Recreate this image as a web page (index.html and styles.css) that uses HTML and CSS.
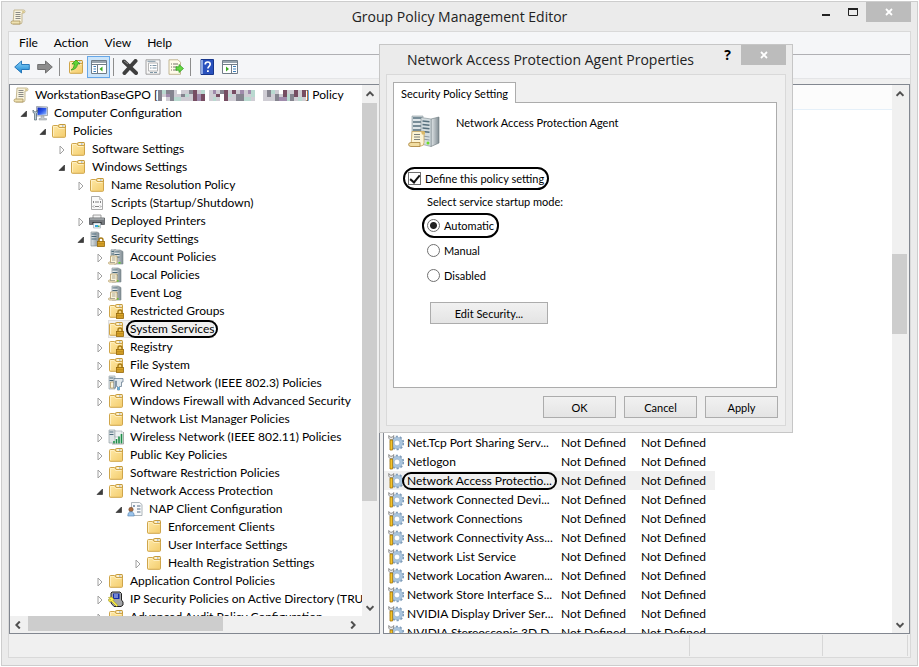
FILE: index.html
```html
<!DOCTYPE html>
<html lang="en">
<head>
<meta charset="utf-8">
<title>Group Policy Management Editor</title>
<link rel="stylesheet" href="styles.css">
</head>
<body>
<svg class="defs" aria-hidden="true">
  <defs>
    <linearGradient id="gold" x1="0" y1="0" x2="1" y2="1"><stop offset="0" stop-color="#ffe9a6"/><stop offset="1" stop-color="#f3cc6c"/></linearGradient>
    <linearGradient id="steel" x1="0" y1="0" x2="1" y2="0"><stop offset="0" stop-color="#e3e8ea"/><stop offset="1" stop-color="#7f8b92"/></linearGradient>
    <linearGradient id="sky" x1="0" y1="0" x2="0" y2="1"><stop offset="0" stop-color="#8fd6fb"/><stop offset="1" stop-color="#1583d0"/></linearGradient>
    <linearGradient id="screen" x1="0" y1="0" x2="1" y2="1"><stop offset="0" stop-color="#0a1fb0"/><stop offset=".5" stop-color="#2a56ea"/><stop offset="1" stop-color="#9cc4ff"/></linearGradient>
    <symbol id="scroll" viewBox="0 0 16 16">
      <path d="M4 1h9.500q1.500 0 1.500 1.500T13.500 4H12v9q0 2-2 2H3z" fill="#f7f2de" stroke="#b9aa7c" stroke-width=".8"/>
      <path d="M1 13.500Q1 12 2.500 12H10v3H2.500Q1 15 1 13.500z" fill="#efe2b2" stroke="#a8935c" stroke-width=".8"/>
      <path d="M12.500 1.500q-1 1 0 2.500h1.800V2z" fill="#d9c88e"/>
      <path d="M5.500 3.500h5M5.500 5.500h5M5.500 7.500h5M5.500 9.500h5" stroke="#8a8a86" stroke-width="1"/>
    </symbol>
    <symbol id="folder" viewBox="0 0 16 16">
      <path d="M7.500 4.500V2.500q0-1 1-1H14q.5 0 .5 1v3z" fill="#f7dc94" stroke="#c49a3c" stroke-width="1"/>
      <path d="M9 3h4.500" stroke="#fff" stroke-width="1.200"/><path d="M11 3h1.500" stroke="#7b9fc4"/>
      <path d="M1.500 13.500v-10q0-1 1-1H6.500L8 4.500h6q.5 0 .5 1v8q0 .8-.8.800H2.300q-.8 0-.8-.8z" fill="url(#gold)" stroke="#cfa54a" stroke-width="1"/>
      <path d="M2.500 13V3.500h3.700l1.500 2H13.500" fill="none" stroke="#fff3cc" stroke-width=".8"/>
    </symbol>
    <symbol id="lock" viewBox="0 0 16 16">
      <path d="M10 11V9a2 2 0 0 1 4 0v2" fill="none" stroke="#a87b16" stroke-width="1.400"/>
      <rect x="8.500" y="10.500" width="7" height="5" fill="#e5ae2e" stroke="#94680b" stroke-width=".8"/>
      <path d="M9 12.300h6M9 14h6" stroke="#a87812" stroke-width=".7"/>
    </symbol>
    <symbol id="folder-lock" viewBox="0 0 16 16"><use href="#folder"/><use href="#lock"/></symbol>
    <symbol id="computer" viewBox="0 0 16 16">
      <path d="M4.500 1.500 15.500 2v8.500L4.500 11z" fill="#dfe3e8" stroke="#8e969e" stroke-width=".8"/>
      <path d="M5.500 2.500 14.500 3v6.600L5.500 10z" fill="url(#screen)"/>
      <path d="M9 11h3v2.500h2.500V15H7v-1.500h2z" fill="#c3c8cc" stroke="#8d9499" stroke-width=".5"/>
      <path d="M1 5v2.500l1.500 1V15h2V8.500l1-1V5L4.300 6.800H2.500z" fill="#b9ccd6" stroke="#51646f" stroke-width=".7"/>
    </symbol>
    <symbol id="script" viewBox="0 0 16 16">
      <path d="M2.500 1.500h8l3 3v10h-11z" fill="#fafafa" stroke="#a9a9a9"/><path d="M10.500 1.500v3h3" fill="#e1e1e1" stroke="#b5b5b5" stroke-width=".7"/>
      <path d="M5 6 4 7l1 1M11 6l1 1-1 1M6 7h4M5 10.500l-1 1 1 1M11 10.500l1 1-1 1M6 11.500h4" fill="none" stroke="#777" stroke-width=".9"/>
    </symbol>
    <symbol id="printer" viewBox="0 0 16 16">
      <path d="M4 5V2h8v3" fill="#f4f4f4" stroke="#8c8c8c" stroke-width=".8"/>
      <path d="M.5 5h15v6.500H.5z" fill="#73777b" stroke="#54585c" stroke-width=".8"/><path d="M1 6h14" stroke="#c4c9cc"/>
      <path d="M3.500 9h9v2h-9z" fill="#26292b"/><path d="M4.500 10h7v5h-7z" fill="#eef5fa" stroke="#97a4ad" stroke-width=".6"/>
      <path d="M6 12h3v2H6z" fill="#36a5d6"/><path d="M9 12.500h1.500V14H9z" fill="#55b14a"/>
    </symbol>
    <symbol id="tower" viewBox="0 0 16 16">
      <path d="M5 1h6l3 1.500V15H5z" fill="url(#steel)" stroke="#7b868c" stroke-width=".6"/><path d="M5.500 3h5M5.500 5.500h5M5.500 8h5" stroke="#4a6878" stroke-width="1.200"/>
      <path d="M5.500 4.200h5M5.500 6.800h5" stroke="#fff" stroke-width=".7"/><rect x="9.500" y="13" width="2" height="1.600" fill="#5fd01f"/>
    </symbol>
    <symbol id="mini-scroll" viewBox="0 0 16 16">
      <path d="M2.500 7H9v6.500q0 1.500-1.500 1.500H1.500q-1 0-1-1t1-1h1z" fill="#fbf4dc" stroke="#b59c66" stroke-width=".8"/><path d="M4 9h3.500M4 11h3.500M2 13.500h5" stroke="#8b8775" stroke-width=".7"/>
    </symbol>
    <symbol id="server-lock" viewBox="0 0 16 16"><path d="M2 1h6l2 1v13H2z" fill="url(#steel)" stroke="#7b868c" stroke-width=".6"/><path d="M2.500 3h5M2.500 5.500h5M2.500 8h5" stroke="#49687a" stroke-width="1.200"/><use href="#lock"/></symbol>
    <symbol id="server" viewBox="0 0 16 16"><use href="#tower" x="-1"/><use href="#mini-scroll"/></symbol>
    <symbol id="servers" viewBox="0 0 16 16"><path d="M3 .8h5v12H3z" fill="#c4cdd1" stroke="#78868e" stroke-width=".6"/><path d="M3.500 2.500h4M3.500 5h4" stroke="#49687a"/><use href="#tower" x="1"/><use href="#mini-scroll"/></symbol>
    <symbol id="wired" viewBox="0 0 16 16"><path d="M1 1h6v13H1z" fill="#dfe4e6" stroke="#87939a" stroke-width=".6"/><path d="M1.500 3h4M1.500 5.500h4" stroke="#49687a"/><path d="M2.500 7H6v6H2.500z" fill="#fbf4dc" stroke="#b59c66" stroke-width=".8"/><path d="M6 3.500h9V7h-1.500v4.500h-2V15h-2v-3.500H8.500V6H7.500v7H6z" fill="#e2e9ee" stroke="#6d8294" stroke-width=".8"/><path d="M9.500 12h2v3h-2z" fill="#65aeda"/></symbol>
    <symbol id="wireless" viewBox="0 0 16 16"><path d="M1 1h6v13H1z" fill="#dfe4e6" stroke="#87939a" stroke-width=".6"/><path d="M1.500 3h4M1.500 5.500h4" stroke="#49687a"/><path d="M7 2h7v6H7z" fill="#eef1f2" stroke="#98a3a9" stroke-width=".6"/><path d="M4 14.500 15.500 3v11.500z" fill="#e4f3e7"/><path d="M6 14.500V12M8.500 14.500V10M11 14.500V7.500M13.500 14.500V5" stroke="#1d8d4a" stroke-width="1.600"/><path d="M4 15h11.500V3" fill="none" stroke="#777" stroke-width=".6"/></symbol>
    <symbol id="nap" viewBox="0 0 16 16"><path d="M4.500 1.500h8l2.500 2v11H4.500z" fill="#f9fafb" stroke="#9ba3a9" stroke-width=".8"/><path d="M10 5h3.500M10 8h3.500M10 11h3.500" stroke="#536b83"/><circle cx="7" cy="5" r="1" fill="#617e9c"/><circle cx="4" cy="8.500" r="2.200" fill="#a8683c" stroke="#66442b" stroke-width=".5"/><path d="M.8 15q0-4.300 3.200-4.300T7.200 15z" fill="#9bc3ea" stroke="#4e7eac" stroke-width=".6"/></symbol>
    <symbol id="ipsec" viewBox="0 0 16 16"><path d="M4 1h8l1.500 1.500V9L15 11v3l-2 1.500H6L3 12V2z" fill="#a3a5a8" stroke="#222" stroke-width="1"/><path d="M5 2.500h6.500V8H5z" fill="#132ca8"/><path d="M6 4h4M6 6h4" stroke="#cfdcff"/><path d="M.5 6.500 4 6l2 2.500L5 9.500l5 5-1.500 1-5-5L1.500 11 0 8.500l2.500.500z" fill="#fff34a" stroke="#8d8208" stroke-width=".5"/></symbol>
    <symbol id="gear" viewBox="0 0 16 16">
      <g transform="translate(9 8)"><circle r="6.400" fill="none" stroke="#7f9dba" stroke-width="1.800" stroke-dasharray="2.200 1.820"/><circle r="4.300" fill="#fff" stroke="#a9c5de" stroke-width="2.800"/><circle r="5.700" fill="none" stroke="#7f9dba" stroke-width=".5"/><circle r="2.900" fill="#fff" stroke="#7699b8" stroke-width=".6"/></g>
      <path d="M.8.500v2.600l1.300 1.700h2.300L5.700 3.100V.5L4.300 2.200H2.300z" fill="#ececec" stroke="#777" stroke-width=".8"/><path d="M2 5h2.600v10H2z" fill="#f6c52b" stroke="#9f7209" stroke-width=".8"/>
    </symbol>
    <symbol id="collapsed" viewBox="0 0 11 18"><path d="M1.500 6v8l4-4z" fill="#fff" stroke="#a0a0a0"/></symbol>
    <symbol id="expanded" viewBox="0 0 11 18"><path d="M6 7v5.500H.5z" fill="#3c3c3c" stroke="#222" stroke-width=".6"/></symbol>
    <symbol id="up" viewBox="0 0 8 6"><path d="M.5 4.800 4 1.300l3.500 3.500" fill="none" stroke="#505050" stroke-width="2"/></symbol>
  </defs>
</svg>

<main class="window">
  <header class="titlebar">
    <svg class="app-icon"><use href="#scroll"/></svg>
    <h1>Group Policy Management Editor</h1>
    <div class="controls">
      <button class="ctl" aria-label="Minimize"><svg width="10" height="10"><path d="M1 7h8v2H1z" fill="#222"/></svg></button>
      <button class="ctl" aria-label="Maximize"><svg width="10" height="10"><path d="M.5 1.500h9v7h-9z" fill="none" stroke="#222"/><path d="M0 1h10v2H0z" fill="#222"/></svg></button>
      <button class="close" aria-label="Close"><svg width="8" height="8"><path d="m1 1 6 6M7 1 1 7" stroke="#fff" stroke-width="1.800"/></svg></button>
    </div>
  </header>

  <div class="frame">
    <nav class="menu"><button>File</button><button>Action</button><button>View</button><button>Help</button></nav>
    <div class="toolbar">
      <button aria-label="Back"><svg viewBox="0 0 16 16"><path d="M.7 8 7.500 2v3.500h7.800v5H7.500V14z" fill="url(#sky)" stroke="#1a6eb4" stroke-width=".9"/></svg></button>
      <button aria-label="Forward"><svg viewBox="0 0 16 16"><path d="M15.300 8 8.500 2v3.500H.7v5h7.800V14z" fill="#8d8d8d" stroke="#686868" stroke-width=".9"/></svg></button>
      <i></i>
      <button aria-label="Up one level"><svg viewBox="0 0 16 16"><use href="#folder"/><path d="M3 11q3-1 3.500-6H4l4-4 4 4H9.500Q9 10.500 3 11z" fill="#62d435" stroke="#279014" stroke-width=".7"/></svg></button>
      <button class="active" aria-label="Show console tree"><svg viewBox="0 0 16 16"><path d="M.5 1.500h15v13H.5z" fill="#fff" stroke="#707d88"/><path d="M1 2h14v2H1z" fill="#98a4ae"/><path d="M1 5.500h14M6.500 5.500v9" stroke="#707d88"/><path d="M2.500 7.500h2.500M2.500 10h2.500M2.500 12.500h2.500" stroke="#3d80bb" stroke-width="1.200"/><path d="M11.500 7.500v5L8.500 10z" fill="#3bab22"/></svg></button>
      <i></i>
      <button aria-label="Delete"><svg viewBox="0 0 16 16"><path d="m2 2.500 12 11.500M13.500 2 2.500 14" stroke="#3f3f3f" stroke-width="4" stroke-linecap="round"/><path d="m2 2 4 3" stroke="#8b8b8b"/></svg></button>
      <button aria-label="Properties"><svg viewBox="0 0 16 16"><path d="M1 .8h14v14.400H1z" fill="#f6f6f6" stroke="#8d8d8d" stroke-width=".8"/><path d="M3.500 4h9v8h-9z" fill="#fff" stroke="#a4a4a4" stroke-width=".8"/><path d="M2.500 2.300h8M5 6.500h1.500M5 9h1.500M7.500 6.500h4M7.500 9h4M5 13.500h3M9 13.500h3" stroke="#7f97a6"/></svg></button>
      <button aria-label="Export list"><svg viewBox="0 0 16 16"><path d="M1 .8h9l2.500 2.500v12H1z" fill="#fffbea" stroke="#b4a77c" stroke-width=".8"/><path d="M3 5h1M3 8h1M3 11h1M5 5h5M5 8h4M5 11h4" stroke="#76746a"/><path d="M8 7.800h3V5.500L15.500 9.500 11 13.500v-2.300H8z" fill="#65d743" stroke="#289a1b" stroke-width=".7"/></svg></button>
      <i></i>
      <button aria-label="Help"><svg viewBox="0 0 16 16"><path d="M2 .5h12.500v15H2z" fill="#2951be" stroke="#17368c"/><path d="M2 1h2v14H2z" fill="#8fa9e3"/><path d="M6.200 5.500Q6.200 3 8.700 3t2.500 2.300c0 2-2.300 2-2.300 4.200" fill="none" stroke="#fff" stroke-width="1.700"/><path d="M8 11.300h1.800V13H8z" fill="#fff"/></svg></button>
      <button aria-label="Show action pane"><svg viewBox="0 0 16 16"><path d="M.5 1.500h15v13H.5z" fill="#fff" stroke="#707d88"/><path d="M1 2h14v2H1z" fill="#98a4ae"/><path d="M1 5.500h14M9.500 5.500v9" stroke="#707d88"/><path d="M11 7.500h3M11 10h3M11 12.500h3" stroke="#3d80bb" stroke-width="1.200"/><path d="M4 7.500v5L7 10z" fill="#3bab22"/></svg></button>
    </div>

    <div class="panes">
      <section class="pane tree-pane">
        <div class="tree">
          <div class="row root"><svg class="ic"><use href="#scroll"/></svg><span>WorkstationBaseGPO [</span><svg class="mosaic" viewBox="0 0 38 3" preserveAspectRatio="none" shape-rendering="crispEdges">
            <path fill="#cfcdd4" d="M0 0h38v3H0z"/>
            <path fill="#85848f" d="M0 0h1v3H0zM2 0h2v1H2zM3 1h1v2H3zM6 1h1v1H6zM8 0h2v1H8zM16 0h2v1h-2zM20 1h2v2h-2zM28 0h1v2h-1zM30 1h1v2h-1zM34 1h1v2h-1z"/>
            <path fill="#764d62" d="M9 0h1v3H9zM11 1h1v2h-1zM15 1h1v1h-1zM17 0h1v3h-1zM19 0h1v1h-1zM32 0h1v2h-1zM35 0h1v2h-1zM37 0h1v2h-1z"/>
            <path fill="#b9d9d0" d="M1 0h1v1H1zM4 2h2v1H4zM7 1h1v1H7zM11 0h1v1h-1zM14 2h1v1h-1zM18 1h1v1h-1zM22 2h2v1h-2zM24 0h1v2h-1zM29 0h1v1h-1zM33 1h1v2h-1zM36 2h1v1h-1z"/>
            <path fill="#fff" d="M1 2h1v1H1zM5 0h1v1H5zM12 0h1v3h-1zM16 1h1v2h-1zM25 0h2v3h-2zM31 0h1v1h-1z"/>
            <path fill="#a08bac" d="M2 1h1v1H2zM10 1h1v2h-1zM14 0h1v1h-1zM21 0h1v1h-1zM23 0h1v1h-1zM31 2h2v1h-2z"/>
          </svg><span>] Policy</span></div>
          <ul>
            <li><div class="row"><svg class="tw"><use href="#expanded"/></svg><svg class="ic"><use href="#computer"/></svg><span>Computer Configuration</span></div>
            <ul>
              <li><div class="row"><svg class="tw"><use href="#expanded"/></svg><svg class="ic"><use href="#folder"/></svg><span>Policies</span></div>
              <ul>
                <li><div class="row"><svg class="tw"><use href="#collapsed"/></svg><svg class="ic"><use href="#folder"/></svg><span>Software Settings</span></div></li>
                <li><div class="row"><svg class="tw"><use href="#expanded"/></svg><svg class="ic"><use href="#folder"/></svg><span>Windows Settings</span></div>
                <ul>
                  <li><div class="row"><svg class="tw"><use href="#collapsed"/></svg><svg class="ic"><use href="#folder"/></svg><span>Name Resolution Policy</span></div></li>
                  <li><div class="row"><svg class="tw"></svg><svg class="ic"><use href="#script"/></svg><span>Scripts (Startup/Shutdown)</span></div></li>
                  <li><div class="row"><svg class="tw"><use href="#collapsed"/></svg><svg class="ic"><use href="#printer"/></svg><span>Deployed Printers</span></div></li>
                  <li><div class="row"><svg class="tw"><use href="#expanded"/></svg><svg class="ic"><use href="#server-lock"/></svg><span>Security Settings</span></div>
                  <ul>
                    <li><div class="row"><svg class="tw"><use href="#collapsed"/></svg><svg class="ic"><use href="#servers"/></svg><span>Account Policies</span></div></li>
                    <li><div class="row"><svg class="tw"><use href="#collapsed"/></svg><svg class="ic"><use href="#server"/></svg><span>Local Policies</span></div></li>
                    <li><div class="row"><svg class="tw"><use href="#collapsed"/></svg><svg class="ic"><use href="#server"/></svg><span>Event Log</span></div></li>
                    <li><div class="row"><svg class="tw"><use href="#collapsed"/></svg><svg class="ic"><use href="#folder-lock"/></svg><span>Restricted Groups</span></div></li>
                    <li><div class="row"><svg class="tw"></svg><div class="selected"><svg class="ic"><use href="#folder-lock"/></svg><span class="ring">System Services</span></div></div></li>
                    <li><div class="row"><svg class="tw"><use href="#collapsed"/></svg><svg class="ic"><use href="#folder-lock"/></svg><span>Registry</span></div></li>
                    <li><div class="row"><svg class="tw"><use href="#collapsed"/></svg><svg class="ic"><use href="#folder-lock"/></svg><span>File System</span></div></li>
                    <li><div class="row"><svg class="tw"><use href="#collapsed"/></svg><svg class="ic"><use href="#wired"/></svg><span>Wired Network (IEEE 802.3) Policies</span></div></li>
                    <li><div class="row"><svg class="tw"><use href="#collapsed"/></svg><svg class="ic"><use href="#folder"/></svg><span>Windows Firewall with Advanced Security</span></div></li>
                    <li><div class="row"><svg class="tw"></svg><svg class="ic"><use href="#folder"/></svg><span>Network List Manager Policies</span></div></li>
                    <li><div class="row"><svg class="tw"><use href="#collapsed"/></svg><svg class="ic"><use href="#wireless"/></svg><span>Wireless Network (IEEE 802.11) Policies</span></div></li>
                    <li><div class="row"><svg class="tw"><use href="#collapsed"/></svg><svg class="ic"><use href="#folder"/></svg><span>Public Key Policies</span></div></li>
                    <li><div class="row"><svg class="tw"><use href="#collapsed"/></svg><svg class="ic"><use href="#folder"/></svg><span>Software Restriction Policies</span></div></li>
                    <li><div class="row"><svg class="tw"><use href="#expanded"/></svg><svg class="ic"><use href="#folder"/></svg><span>Network Access Protection</span></div>
                    <ul>
                      <li><div class="row"><svg class="tw"><use href="#expanded"/></svg><svg class="ic"><use href="#nap"/></svg><span>NAP Client Configuration</span></div>
                      <ul>
                        <li><div class="row"><svg class="tw"></svg><svg class="ic"><use href="#folder"/></svg><span>Enforcement Clients</span></div></li>
                        <li><div class="row"><svg class="tw"></svg><svg class="ic"><use href="#folder"/></svg><span>User Interface Settings</span></div></li>
                        <li><div class="row"><svg class="tw"><use href="#collapsed"/></svg><svg class="ic"><use href="#folder"/></svg><span>Health Registration Settings</span></div></li>
                      </ul></li>
                    </ul></li>
                    <li><div class="row"><svg class="tw"><use href="#collapsed"/></svg><svg class="ic"><use href="#folder"/></svg><span>Application Control Policies</span></div></li>
                    <li><div class="row"><svg class="tw"><use href="#collapsed"/></svg><svg class="ic"><use href="#ipsec"/></svg><span>IP Security Policies on Active Directory (TRU</span></div></li>
                    <li><div class="row"><svg class="tw"><use href="#collapsed"/></svg><svg class="ic"><use href="#folder"/></svg><span>Advanced Audit Policy Configuration</span></div></li>
                  </ul></li>
                </ul></li>
              </ul></li>
            </ul></li>
          </ul>
        </div>
        <div class="vbar tree-vbar"><button aria-label="Scroll up"><svg class="chev"><use href="#up"/></svg></button><div class="track"><div class="thumb"></div></div><button aria-label="Scroll down"><svg class="chev down"><use href="#up"/></svg></button></div>
        <div class="hbar"><button aria-label="Scroll left"><svg class="chev left"><use href="#up"/></svg></button><div class="track"><div class="thumb"></div></div><button aria-label="Scroll right"><svg class="chev right"><use href="#up"/></svg></button></div>
      </section>

      <section class="pane list-pane">
        <div class="list">
          <div class="list-head"></div>
          <table>
            <tbody>
              <tr><td><svg class="ic"><use href="#gear"/></svg><span>Net.Tcp Port Sharing Serv...</span></td><td>Not Defined</td><td>Not Defined</td></tr>
              <tr><td><svg class="ic"><use href="#gear"/></svg><span>Netlogon</span></td><td>Not Defined</td><td>Not Defined</td></tr>
              <tr class="picked"><td><svg class="ic"><use href="#gear"/></svg><span class="ring">Network Access Protectio...</span></td><td>Not Defined</td><td>Not Defined</td></tr>
              <tr><td><svg class="ic"><use href="#gear"/></svg><span>Network Connected Devi...</span></td><td>Not Defined</td><td>Not Defined</td></tr>
              <tr><td><svg class="ic"><use href="#gear"/></svg><span>Network Connections</span></td><td>Not Defined</td><td>Not Defined</td></tr>
              <tr><td><svg class="ic"><use href="#gear"/></svg><span>Network Connectivity Ass...</span></td><td>Not Defined</td><td>Not Defined</td></tr>
              <tr><td><svg class="ic"><use href="#gear"/></svg><span>Network List Service</span></td><td>Not Defined</td><td>Not Defined</td></tr>
              <tr><td><svg class="ic"><use href="#gear"/></svg><span>Network Location Awaren...</span></td><td>Not Defined</td><td>Not Defined</td></tr>
              <tr><td><svg class="ic"><use href="#gear"/></svg><span>Network Store Interface S...</span></td><td>Not Defined</td><td>Not Defined</td></tr>
              <tr><td><svg class="ic"><use href="#gear"/></svg><span>NVIDIA Display Driver Ser...</span></td><td>Not Defined</td><td>Not Defined</td></tr>
              <tr><td><svg class="ic"><use href="#gear"/></svg><span>NVIDIA Stereoscopic 3D D...</span></td><td>Not Defined</td><td>Not Defined</td></tr>
            </tbody>
          </table>
        </div>
        <div class="vbar list-vbar"><button aria-label="Scroll up"><svg class="chev"><use href="#up"/></svg></button><div class="track"><div class="thumb"></div></div><button aria-label="Scroll down"><svg class="chev down"><use href="#up"/></svg></button></div>
      </section>
    </div>
    <footer class="status"><span></span><span></span><span></span></footer>
  </div>

  <section class="dialog" role="dialog" aria-labelledby="dlg-title">
    <header class="titlebar">
      <h2 id="dlg-title">Network Access Protection Agent Properties</h2>
      <div class="controls">
        <button class="ctl help" aria-label="Help">?</button>
        <button class="close" aria-label="Close"><svg width="8" height="8"><path d="m1 1 6 6M7 1 1 7" stroke="#fff" stroke-width="1.800"/></svg></button>
      </div>
    </header>
    <form class="dialog-body">
      <button type="button" class="tab">Security Policy Setting</button>
      <div class="panel">
        <div class="service">
          <svg class="big" viewBox="0 0 32 32">
            <path d="M4 1h11v26H4z" fill="#cbd4d8" stroke="#8a979e" stroke-width=".6"/><path d="M5 3h9M5 7h9M5 11h9M5 15h9" stroke="#5d7683" stroke-width="1.400"/><path d="M5 5h9M5 9h9M5 13h9" stroke="#f4f8fa"/>
            <path d="M23 4l8-2v26l-8 3.500z" fill="url(#steel)" stroke="#68757b" stroke-width=".6"/><path d="M13 2.500 23 4v27.500L13 29z" fill="#d3dcdf" stroke="#7d8a91" stroke-width=".6"/>
            <path d="m14.500 6 7 .8M14.500 9.500l7 .8M14.500 13l7 .8M14.500 16.500l7 .8" stroke="#566f7c" stroke-width="1.500"/><path d="m14.500 21 7 1M14.500 24l7 1" stroke="#8e9ca3"/><circle cx="20" cy="28" r="1.500" fill="#6bdd25"/>
            <path d="M4 16.500h12v11q0 3.500-3 3.500H3z" fill="#fcf4d5" stroke="#c5a55f" stroke-width=".8"/><path d="M.6 29.500Q.6 27.500 3 27.500h9v4H3Q.6 31.500.6 29.500z" fill="#f1dda1" stroke="#a8813a" stroke-width=".8"/><path d="M13 16.500h4v3h-3z" fill="#dcb967"/><path d="M6 19.500h6M6 22h6M6 24.500h6" stroke="#7c807b" stroke-width="1.200"/>
          </svg>
          <span>Network Access Protection Agent</span>
        </div>
        <label class="check ring"><input type="checkbox" checked>Define this policy setting</label>
        <div class="mode" role="radiogroup" aria-labelledby="mode">
          <p id="mode">Select service startup mode:</p>
          <label class="ring"><input type="radio" name="mode" checked>Automatic</label>
          <label><input type="radio" name="mode">Manual</label>
          <label><input type="radio" name="mode">Disabled</label>
        </div>
        <button type="button" class="btn edit">Edit Security...</button>
      </div>
      <div class="actions"><button type="button" class="btn">OK</button><button type="button" class="btn">Cancel</button><button type="button" class="btn">Apply</button></div>
    </form>
  </section>
</main>
</body>
</html>
```
FILE: styles.css
```css
* { box-sizing: border-box; }
body {
  margin: 0;
  padding: 1px;
  height: 100vh;
  background: #fff;
  color: #000;
  font: 12px/18px Lato, "Open Sans", sans-serif;
  overflow: hidden;
}
button { border: 0; margin: 0; padding: 0; background: none; font: inherit; color: inherit; }
ul { list-style: none; margin: 0; padding: 0; }
h1, h2, p { margin: 0; }
svg { display: block; flex: none; }
.defs { position: absolute; width: 0; height: 0; }

.window {
  position: relative;
  display: flex;
  flex-direction: column;
  height: 100%;
  border: 1px solid #cdcdcd;
  background: #ebebeb;
}
.titlebar { position: relative; display: flex; align-items: center; flex: none; height: 29px; }
.titlebar h1, .titlebar h2 { flex: 1; text-align: center; font: 400 14px/20px "Open Sans", sans-serif; color: #222; }
.app-icon { position: absolute; left: 8px; top: 7px; width: 16px; height: 16px; }
.controls { position: absolute; right: 6px; top: 0; display: flex; align-items: flex-start; }
.ctl { display: grid; place-items: center; width: 27px; height: 20px; }
.close { display: grid; place-items: center; width: 45px; height: 20px; background: #bcbcbc; }

.frame {
  display: flex;
  flex-direction: column;
  flex: 1;
  min-height: 0;
  margin: 0 6px 7px;
  border: 1px solid #d9d9d9;
  background: #f0f0f0;
}
.menu { display: flex; gap: 16px; height: 23px; padding: 0 10px; background: #f5f6f8; border-bottom: 1px solid #b0b0b4; }
.toolbar { display: flex; align-items: center; flex: none; height: 24px; padding: 1px 0 0 1px; background: #f5f6f8; border-bottom: 1px solid #e4e5e7; }
.toolbar button { display: grid; place-items: center; width: 23px; height: 22px; }
.toolbar svg { width: 16px; height: 16px; }
.toolbar i { width: 1px; height: 18px; margin: 0 4px 0 3px; background: #8d8d8d; }
.toolbar .active { background: #cce4f9; border: 1px solid #66a7e8; }

.panes { display: grid; grid-template-columns: 371fr 527fr; gap: 3px; flex: 1; min-height: 0; margin-top: 5px; }
.pane { min-width: 0; min-height: 0; border: 1px solid #828790; background: #fff; overflow: hidden; }

.tree-pane { display: grid; grid-template: minmax(0, 1fr) 17px / minmax(0, 1fr) 17px; background: #f0f0f0; }
.tree { overflow: hidden; background: #fff; padding-top: 1px; white-space: nowrap; }
.tree > ul { padding-left: 10px; }
.tree li > ul { padding-left: 19px; }
.row { display: flex; align-items: center; height: 18px; }
.root { padding-left: 3px; }
.ic { width: 16px; height: 16px; margin-right: 6px; }
.tw { width: 12px; height: 18px; }
.mosaic { width: 148px; height: 11px; }
.selected { display: flex; align-items: center; height: 18px; background: #f0f0f0; outline: 1px solid #dedede; outline-offset: -1px; }

.ring { position: relative; }
.ring::after { content: ""; position: absolute; inset: 0 -5px; border: 2px solid #000; border-radius: 12px; pointer-events: none; }
.selected .ring::after { inset: 0 -4px; }

.vbar { display: flex; flex-direction: column; background: #f0f0f0; }
.hbar { display: flex; grid-column: 1 / -1; background: #f0f0f0; padding-right: 19px; }
.track { flex: 1; display: flex; min-height: 0; }
.vbar .track { flex-direction: column; }
.vbar button, .hbar button { display: grid; place-items: center; width: 15px; height: 17px; }
.thumb { background: #cdcdcd; }
.tree-vbar .thumb { height: 80%; width: 15px; margin-top: 1px; }
.hbar .thumb { width: 61%; height: 15px; margin-left: 3px; }
.list-vbar .thumb { height: 80px; width: 15px; margin-top: 152px; }
.chev { width: 8px; height: 6px; }
.down { transform: rotate(180deg); }
.left { transform: rotate(-90deg); }
.right { transform: rotate(90deg); }

.list-pane { display: grid; grid-template-columns: minmax(0, 1fr) 17px; }
.list { display: flex; flex-direction: column; overflow: hidden; }
.list-head { flex: none; height: 25px; background: #fcfcfc; border-bottom: 1px solid #e5f0f9; }
.list table { width: 331px; margin-top: 323px; border-collapse: collapse; table-layout: fixed; }
.list td { width: 80px; height: 19px; padding: 0 0 0 6px; white-space: nowrap; }
.list td:first-child { display: flex; align-items: center; width: auto; padding-left: 4px; }
.list .ic { margin-right: 3px; }
.picked { background: #f0f0f0; }

.status { display: flex; justify-content: flex-end; flex: none; height: 23px; padding: 1px 2px 1px 0; }
.status span { border-right: 1px solid #d7d7d7; }
.status span:nth-child(2) { width: 133px; }
.status span:nth-child(3) { width: 85px; }

.dialog {
  position: absolute;
  left: 377px;
  top: 42px;
  width: 414px;
  border: 1px solid #c6c6c6;
  background: #ebebeb;
}
.dialog .titlebar h2 { padding-right: 71px; }
.help { font: 700 14px/20px "Open Sans", sans-serif; }
.dialog-body {
  margin: 0 6px 6px;
  padding: 7px 8px 7px 6px;
  border: 1px solid #d9d9d9;
  background: #f0f0f0;
  font: 11px/15px Lato, "Liberation Sans", sans-serif;
}
.tab { position: relative; display: block; height: 21px; padding: 0 7px; border: 1px solid #acacac; border-bottom: 0; background: #fff; }
.panel { height: 286px; margin-top: -1px; padding: 12px 14px; border: 1px solid #acacac; background: #fff; }
.service { display: flex; gap: 16px; height: 32px; margin-bottom: 20px; }
.big { width: 32px; height: 32px; }
.panel label { display: flex; align-items: center; gap: 4px; width: fit-content; height: 25px; }
.panel .check { height: 23px; }
.mode { padding-left: 19px; }
.mode p { line-height: 23px; }
.panel input { appearance: none; width: 13px; height: 13px; margin: 0; border: 1px solid #707070; background: #fff; }
.panel input[type="radio"] { border-radius: 50%; }
.panel input[type="radio"]:checked { background: radial-gradient(circle, #222 0 3px, #fff 4px); }
.panel input[type="checkbox"] { position: relative; }
.panel input[type="checkbox"]:checked::after { content: ""; position: absolute; left: 3px; top: 0; width: 4px; height: 8px; border: solid #111; border-width: 0 2px 2px 0; transform: rotate(40deg); }
.btn { width: 73px; height: 22px; border: 1px solid #acacac; background: linear-gradient(#f1f1f1, #e4e4e4); }
.edit { width: 118px; margin: 14px 0 0 22px; }
.actions { display: flex; justify-content: flex-end; gap: 8px; margin: 8px -1px 0 0; }
```
